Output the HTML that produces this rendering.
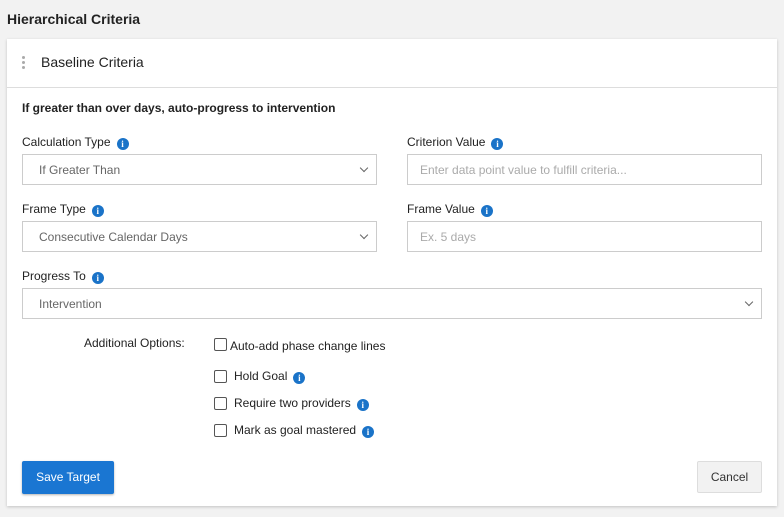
<!DOCTYPE html><html><head><style>
*{box-sizing:border-box;margin:0;padding:0}
body{width:784px;height:517px;background:#f2f2f2;font-family:"Liberation Sans",sans-serif;position:relative;overflow:hidden;color:#222}
.a{position:absolute}
.card{left:7px;top:39px;width:770px;height:467px;background:#fff;box-shadow:0 1px 3px rgba(0,0,0,.2)}
.lbl{font-size:12px;color:#222}
.in{border:1px solid #ccc;height:31px;font-size:12px;color:#666;padding:8px 16px;background:#fff}
.ph{color:#aaa;padding-left:12px}
.i{display:inline-block;width:12px;height:12px;border-radius:50%;background:#1a73c8;color:#fff;font-size:9px;font-weight:bold;text-align:center;line-height:12px;vertical-align:-1px;margin-left:6px;font-family:"Liberation Serif",serif}
.cb{width:13px;height:13px;border:1px solid #555;border-radius:2px;background:#fff}
.ch{position:absolute;right:9px;top:10px;width:6px;height:6px;border-right:1.5px solid #666;border-bottom:1.5px solid #666;transform:rotate(45deg)}
</style></head><body>
<div class="a" style="left:7px;top:11px;font-size:14px;font-weight:bold">Hierarchical Criteria</div>
<div class="a card"></div>
<div class="a" style="left:22px;top:56px;width:4px;line-height:0">
<div style="width:3px;height:3px;border-radius:50%;background:#aaa;margin-bottom:2px"></div><div style="width:3px;height:3px;border-radius:50%;background:#aaa;margin-bottom:2px"></div><div style="width:3px;height:3px;border-radius:50%;background:#aaa"></div></div>
<div class="a" style="left:41px;top:54px;font-size:14px;color:#222">Baseline Criteria</div>
<div class="a" style="left:7px;top:87px;width:770px;height:1px;background:#ddd"></div>
<div class="a" style="left:22px;top:101px;font-size:12px;font-weight:bold">If greater than over days, auto-progress to intervention</div>
<div class="a lbl" style="left:22px;top:135px">Calculation Type<span class="i">i</span></div>
<div class="a in" style="left:22px;top:154px;width:355px">If Greater Than<span class="ch"></span></div>
<div class="a lbl" style="left:407px;top:135px">Criterion Value<span class="i">i</span></div>
<div class="a in ph" style="left:407px;top:154px;width:355px">Enter data point value to fulfill criteria...</div>
<div class="a lbl" style="left:22px;top:202px">Frame Type<span class="i">i</span></div>
<div class="a in" style="left:22px;top:221px;width:355px">Consecutive Calendar Days<span class="ch"></span></div>
<div class="a lbl" style="left:407px;top:202px">Frame Value<span class="i">i</span></div>
<div class="a in ph" style="left:407px;top:221px;width:355px">Ex. 5 days</div>
<div class="a lbl" style="left:22px;top:269px">Progress To<span class="i">i</span></div>
<div class="a in" style="left:22px;top:288px;width:740px">Intervention<span class="ch"></span></div>
<div class="a lbl" style="left:84px;top:336px">Additional Options:</div>
<div class="a cb" style="left:214px;top:338px"></div>
<div class="a lbl" style="left:230px;top:339px">Auto-add phase change lines</div>
<div class="a cb" style="left:214px;top:370px"></div>
<div class="a lbl" style="left:234px;top:369px">Hold Goal<span class="i">i</span></div>
<div class="a cb" style="left:214px;top:397px"></div>
<div class="a lbl" style="left:234px;top:396px">Require two providers<span class="i">i</span></div>
<div class="a cb" style="left:214px;top:424px"></div>
<div class="a lbl" style="left:234px;top:423px">Mark as goal mastered<span class="i">i</span></div>
<div class="a" style="left:22px;top:461px;width:92px;height:33px;background:#1a76d2;border-radius:2px;color:#fff;font-size:12px;text-align:center;line-height:33px;box-shadow:0 1px 2px rgba(0,0,0,.3)">Save Target</div>
<div class="a" style="left:697px;top:461px;width:65px;height:32px;background:#f2f2f2;border:1px solid #ddd;border-radius:2px;color:#333;font-size:12px;text-align:center;line-height:30px">Cancel</div>
</body></html>
